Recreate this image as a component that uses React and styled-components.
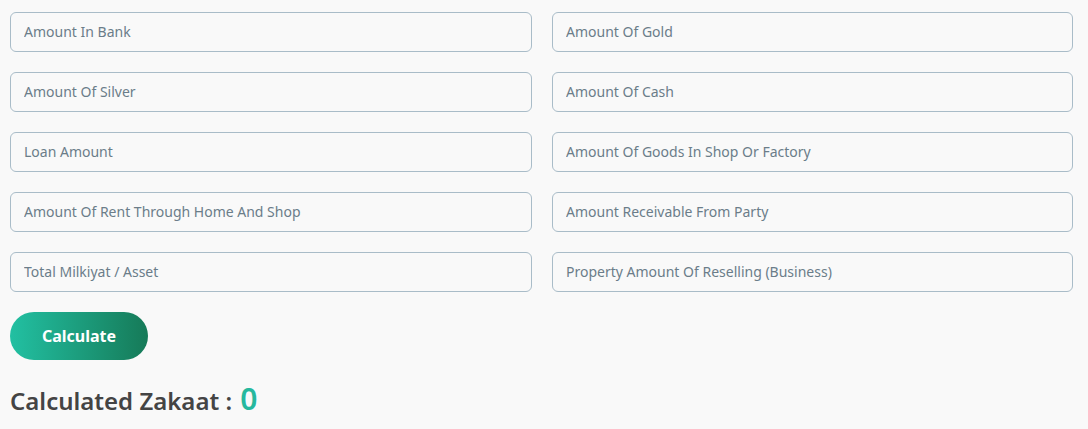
import React from "react";
import styled, { createGlobalStyle } from "styled-components";

const GlobalStyle = createGlobalStyle`
  body {
    margin: 0;
    background: #f9f9f9;
    font-family: "Noto Sans", "Open Sans", sans-serif;
  }
`;

const fields = [
  "Amount In Bank",
  "Amount Of Gold",
  "Amount Of Silver",
  "Amount Of Cash",
  "Loan Amount",
  "Amount Of Goods In Shop Or Factory",
  "Amount Of Rent Through Home And Shop",
  "Amount Receivable From Party",
  "Total Milkiyat / Asset",
  "Property Amount Of Reselling (Business)",
];

export default () => {
  return (
    <Wrapper>
      <GlobalStyle />
      <FieldGrid>
        {fields.map((f) => (
          <Input key={f} placeholder={f} />
        ))}
      </FieldGrid>
      <Button>Calculate</Button>
      <Result>
        Calculated Zakaat : <Amount>0</Amount>
      </Result>
    </Wrapper>
  );
};

const Wrapper = styled.div`
  padding: 12px 15px 0 10px;
`;

const FieldGrid = styled.div`
  display: grid;
  grid-template-columns: 522px 1fr;
  column-gap: 20px;
  row-gap: 20px;
`;

const Input = styled.input`
  box-sizing: border-box;
  height: 40px;
  width: 100%;
  padding: 0 13px 2px;
  border: 1px solid #a9bcc8;
  border-radius: 6px;
  background: #f9f9f9;
  font-family: "Noto Sans", sans-serif;
  font-size: 14px;
  outline: none;
  &::placeholder {
    color: #6b7d89;
  }
`;

const Button = styled.button`
  display: block;
  margin-top: 20px;
  width: 138px;
  height: 48px;
  border: none;
  border-radius: 24px;
  background: linear-gradient(90deg, #22c0a2 0%, #167a58 100%);
  color: #fff;
  font-family: "Noto Sans", sans-serif;
  font-weight: 700;
  font-size: 16px;
  cursor: pointer;
`;

const Result = styled.div`
  margin-top: 18px;
  font-size: 24px;
  font-weight: 600;
  color: #444;
`;

const Amount = styled.span`
  margin-left: 2px;
  font-size: 30px;
  color: #26b89e;
`;
